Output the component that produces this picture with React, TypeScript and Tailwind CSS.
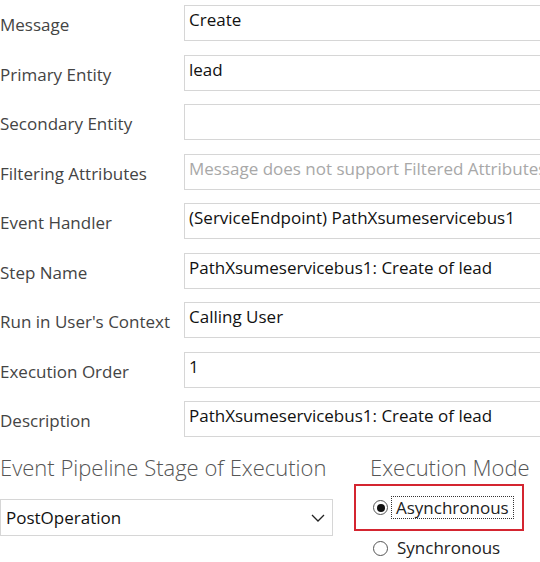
import React from "react";

const rows: { label: string; value: string; placeholder?: boolean }[] = [
  { label: "Message", value: "Create" },
  { label: "Primary Entity", value: "lead" },
  { label: "Secondary Entity", value: "" },
  { label: "Filtering Attributes", value: "Message does not support Filtered Attributes", placeholder: true },
  { label: "Event Handler", value: "(ServiceEndpoint) PathXsumeservicebus1" },
  { label: "Step Name", value: "PathXsumeservicebus1: Create of lead" },
  { label: "Run in User's Context", value: "Calling User" },
  { label: "Execution Order", value: "1" },
  { label: "Description", value: "PathXsumeservicebus1: Create of lead" },
];

function Radio({ checked }: { checked?: boolean }) {
  return (
    <span className="w-[15px] h-[15px] rounded-full border border-[#555] flex items-center justify-center shrink-0">
      {checked && <span className="w-[8px] h-[8px] rounded-full bg-[#111]" />}
    </span>
  );
}

export default function App() {
  return (
    <div
      className="w-[540px] h-[562px] overflow-hidden bg-white text-[#444]"
      style={{ fontFamily: '"Open Sans", "Noto Sans", sans-serif' }}
    >
      <div className="flex flex-col gap-[13.5px] pt-[5px]">
        {rows.map((row) => (
          <div key={row.label} className="flex items-start">
            <div className="w-[184px] shrink-0 text-[17px] leading-[22px] pt-[9px] whitespace-nowrap">
              {row.label}
            </div>
            <div className="w-[420px] shrink-0 h-9 border border-[#d6d6d6] px-[4px] pt-[3px] text-[17px] leading-[22px] whitespace-nowrap overflow-hidden">
              <span className={row.placeholder ? "text-[#a8a8a8]" : "text-[#111]"}>{row.value}</span>
            </div>
          </div>
        ))}
      </div>

      <div className="flex mt-[16px]">
        <div className="w-[333px] shrink-0 flex flex-col">
          <div className="text-[22px] leading-[28px] font-light text-[#555] whitespace-nowrap">
            Event Pipeline Stage of Execution
          </div>
          <div className="mt-[18px] h-[37px] border border-[#d6d6d6] flex items-center justify-between pl-[5px] pr-[7px]">
            <span className="text-[17px] text-[#111]">PostOperation</span>
            <svg width="14" height="8" viewBox="0 0 14 8" fill="none">
              <path d="M1 1l6 6 6-6" stroke="#222" strokeWidth="1.3" />
            </svg>
          </div>
        </div>
        <div className="ml-[21px] flex flex-col">
          <div className="ml-[16px] text-[22px] leading-[28px] font-light text-[#555] whitespace-nowrap">
            Execution Mode
          </div>
          <div className="mt-[3px] w-[170px] h-[47px] border-2 border-[#d42530] flex items-center pl-[17px]">
            <Radio checked />
            <span className="ml-[3px] px-[4px] border border-dotted border-[#333] text-[17px] leading-[21px] text-[#222]">
              Asynchronous
            </span>
          </div>
          <div className="mt-[6px] flex items-center pl-[19px]">
            <Radio />
            <span className="ml-[9px] text-[17px] leading-[22px] text-[#222]">Synchronous</span>
          </div>
        </div>
      </div>
    </div>
  );
}
